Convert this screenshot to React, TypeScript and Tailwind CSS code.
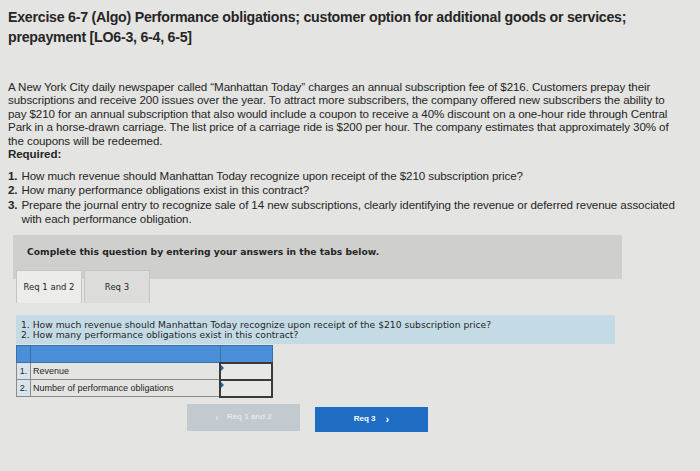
export default function App() {
  const para = [
    'A New York City daily newspaper called “Manhattan Today” charges an annual subscription fee of $216. Customers prepay their',
    'subscriptions and receive 200 issues over the year. To attract more subscribers, the company offered new subscribers the ability to',
    'pay $210 for an annual subscription that also would include a coupon to receive a 40% discount on a one-hour ride through Central',
    'Park in a horse-drawn carriage. The list price of a carriage ride is $200 per hour. The company estimates that approximately 30% of',
    'the coupons will be redeemed.',
  ]

  return (
    <div className="relative h-[471px] w-[700px] overflow-hidden bg-[#e4e4e2] text-[#262626]" style={{ fontFamily: '"Liberation Sans", Arial, sans-serif' }}>
      <div className="px-2 pt-[7px]">
        <h1 className="text-[14.2px] font-bold leading-[20px] tracking-[-0.25px]">
          <div className="whitespace-nowrap">Exercise 6-7 (Algo) Performance obligations; customer option for additional goods or services;</div>
          <div className="whitespace-nowrap">prepayment [LO6-3, 6-4, 6-5]</div>
        </h1>

        <div className="mt-[33px] text-[11.6px] leading-[13.4px] tracking-[-0.1px]">
          {para.map((line) => (
            <div key={line} className="whitespace-nowrap">{line}</div>
          ))}
          <div className="font-bold">Required:</div>
        </div>

        <ol className="mt-[9px] text-[11.6px] leading-[13.5px] tracking-[-0.1px]">
          <li className="flex gap-[4px] whitespace-nowrap"><span className="font-bold">1.</span><span>How much revenue should Manhattan Today recognize upon receipt of the $210 subscription price?</span></li>
          <li className="flex gap-[4px] whitespace-nowrap"><span className="font-bold">2.</span><span>How many performance obligations exist in this contract?</span></li>
          <li className="mt-[2px] flex gap-[4px] whitespace-nowrap">
            <span className="font-bold">3.</span>
            <span>
              Prepare the journal entry to recognize sale of 14 new subscriptions, clearly identifying the revenue or deferred revenue associated
              <br />
              with each performance obligation.
            </span>
          </li>
        </ol>
      </div>

      <div className="ml-[13px] mt-[10px] w-[609px] bg-[#cfcfcd] px-[14px] pb-[21px] pt-[11px]" style={{ fontFamily: '"DejaVu Sans", Verdana, sans-serif' }}>
        <p className="text-[9.2px] font-bold leading-[12px]">Complete this question by entering your answers in the tabs below.</p>
      </div>

      <div className="ml-[16px] -mt-[9px]" style={{ fontFamily: '"DejaVu Sans", Verdana, sans-serif' }}>
        <div className="flex gap-[2px]">
          <div className="flex h-[33px] w-[66px] items-center justify-center border border-b-0 border-[#c4c4c2] bg-[#ececea] text-[8.5px]">Req 1 and 2</div>
          <div className="flex h-[33px] w-[66px] items-center justify-center border border-b-0 border-[#c4c4c2] bg-[#dcdcda] text-[8.5px]">Req 3</div>
        </div>
        <div className="mt-[12px] w-[599px] bg-[#c4dbe6] px-[5px] pb-[4px] pt-[5px] text-[9.2px] leading-[10px]">
          <div>1. How much revenue should Manhattan Today recognize upon receipt of the $210 subscription price?</div>
          <div>2. How many performance obligations exist in this contract?</div>
        </div>

        <table className="mt-[1px] w-[257px] border-collapse text-[9px]" style={{ fontFamily: '"Liberation Sans", Arial, sans-serif' }}>
          <tbody>
            <tr className="h-[17px] bg-[#4a8fd8]">
              <td className="w-[14px] border border-[#3d6fa8]" />
              <td className="border border-[#3d6fa8]" />
              <td className="w-[52px] border border-[#3d6fa8]" />
            </tr>
            <tr className="h-[17px]">
              <td className="border border-[#8a8a8a] bg-[#d8e3ec] text-center">1.</td>
              <td className="border border-[#8a8a8a] px-[2px]">Revenue</td>
              <td className="relative border-2 border-[#3a3a3a] bg-[#e8e8e6]">
                <span className="absolute left-0 top-[1px] h-0 w-0 border-y-[3px] border-l-[3px] border-y-transparent border-l-[#2b5fa8]" />
              </td>
            </tr>
            <tr className="h-[17px]">
              <td className="border border-[#8a8a8a] bg-[#d8e3ec] text-center">2.</td>
              <td className="border border-[#8a8a8a] px-[2px]">Number of performance obligations</td>
              <td className="relative border-2 border-[#3a3a3a] bg-[#e8e8e6]">
                <span className="absolute left-0 top-[1px] h-0 w-0 border-y-[3px] border-l-[3px] border-y-transparent border-l-[#2b5fa8]" />
              </td>
            </tr>
          </tbody>
        </table>
      </div>

      <div className="ml-[187px] mt-[6px] flex items-start gap-[15px]" style={{ fontFamily: '"Liberation Sans", Arial, sans-serif' }}>
        <div className="flex h-[27px] w-[113px] items-center justify-center gap-[8px] bg-[#c2c9cf] text-[8px] font-bold text-[#e4e8ec]">
          <span className="text-[11px] font-normal">‹</span>
          <span>Req 1 and 2</span>
        </div>
        <div className="mt-[3px] flex h-[25px] w-[113px] items-center justify-center gap-[10px] bg-[#1f6cc4] text-[8px] font-bold text-white">
          <span>Req 3</span>
          <span className="text-[11px]">›</span>
        </div>
      </div>
    </div>
  )
}
